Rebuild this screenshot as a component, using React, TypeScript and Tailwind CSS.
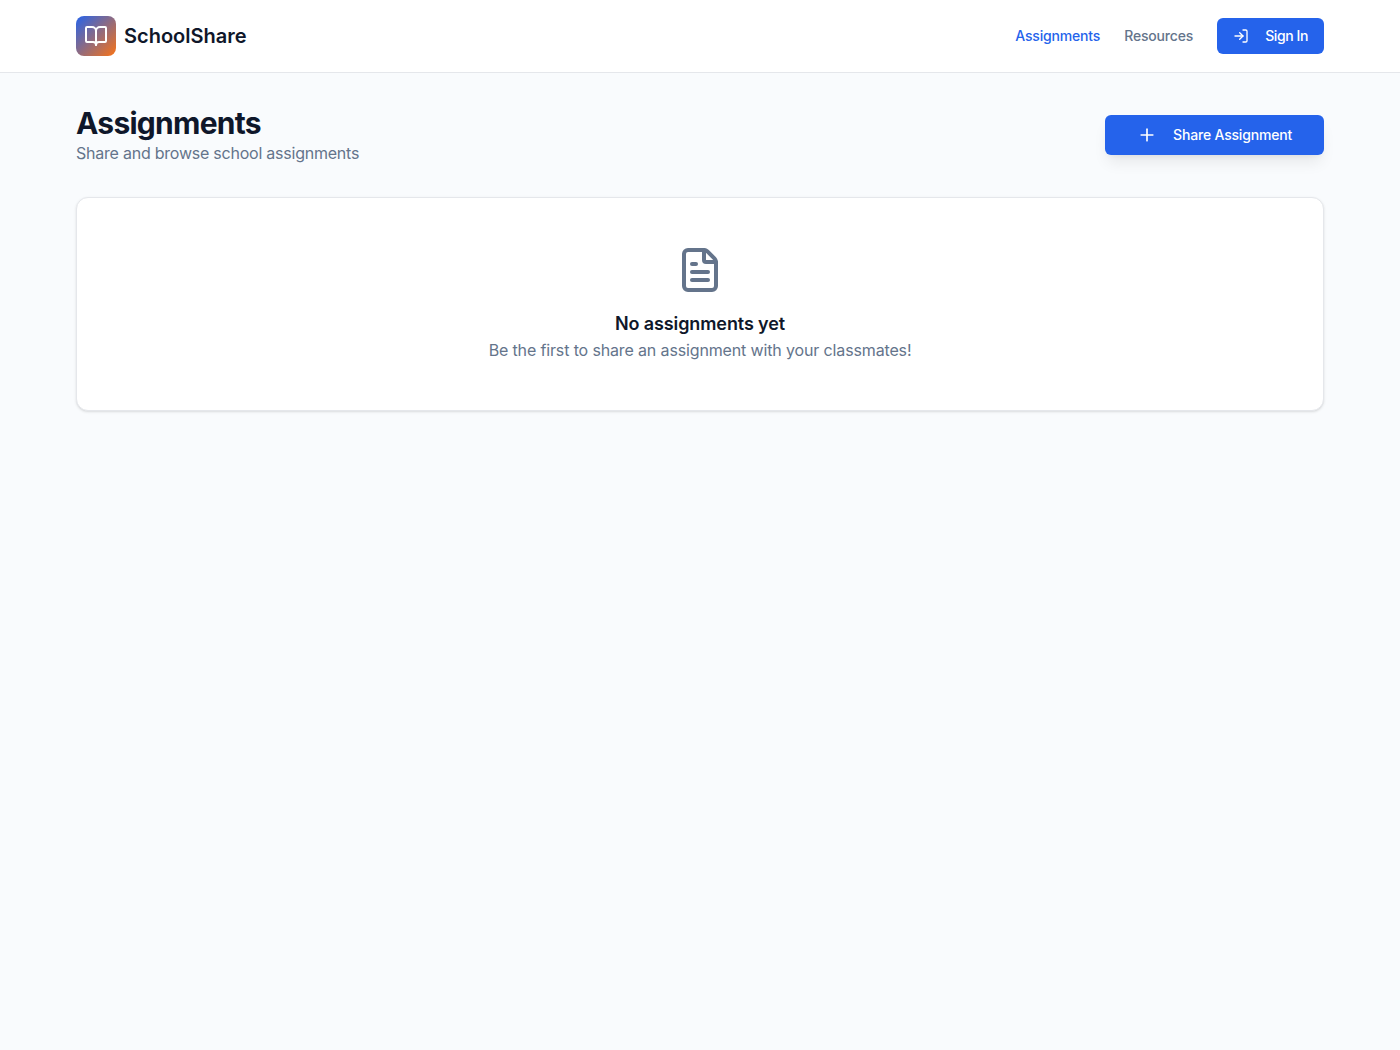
import { BookOpen, FileText, LogIn, Plus } from "lucide-react";

export default function App() {
  return (
    <div className="min-h-screen bg-[#f9fbfd] font-['Inter',sans-serif] text-[#0f172a]">
      <header className="border-b border-[#e5e7eb] bg-white">
        <div className="mx-auto flex h-[72px] max-w-7xl items-center justify-between px-4">
          <div className="flex items-center gap-2">
            <div className="flex h-10 w-10 items-center justify-center rounded-lg bg-[linear-gradient(135deg,#2563eb,#f97316)]">
              <BookOpen className="h-6 w-6 text-white" />
            </div>
            <span className="text-xl font-semibold">SchoolShare</span>
          </div>
          <nav className="flex items-center gap-6 text-sm font-medium tracking-[-0.17px]">
            <a className="text-[#2563eb]">Assignments</a>
            <a className="text-[#64748b]">Resources</a>
            <button className="flex h-9 items-center gap-4 rounded-md bg-[#2563eb] px-4 tracking-[-0.4px] text-white">
              <LogIn className="h-4 w-4" />
              Sign In
            </button>
          </nav>
        </div>
      </header>
      <main className="mx-auto max-w-7xl px-4 py-8">
        <div className="mb-8 flex items-center justify-between">
          <div>
            <h1 className="text-3xl font-bold tracking-[-0.73px]">Assignments</h1>
            <p className="text-base tracking-[-0.23px] text-[#64748b]">Share and browse school assignments</p>
          </div>
          <button className="flex h-10 items-center gap-4 rounded-md bg-[#2563eb] px-8 text-sm font-medium tracking-[-0.19px] text-white shadow-[0_10px_15px_-3px_rgba(0,0,0,0.08),0_4px_6px_-4px_rgba(0,0,0,0.08)]">
            <Plus className="h-5 w-5" />
            Share Assignment
          </button>
        </div>
        <div className="flex flex-col items-center rounded-xl border border-[#e5e7eb] bg-white py-12 shadow-sm">
          <FileText className="mb-4 h-12 w-12 text-[#64748b]" />
          <h3 className="py-px text-lg leading-[26px] font-semibold tracking-[-0.11px]">No assignments yet</h3>
          <p className="text-base tracking-[-0.14px] text-[#64748b]">Be the first to share an assignment with your classmates!</p>
        </div>
      </main>
    </div>
  );
}
